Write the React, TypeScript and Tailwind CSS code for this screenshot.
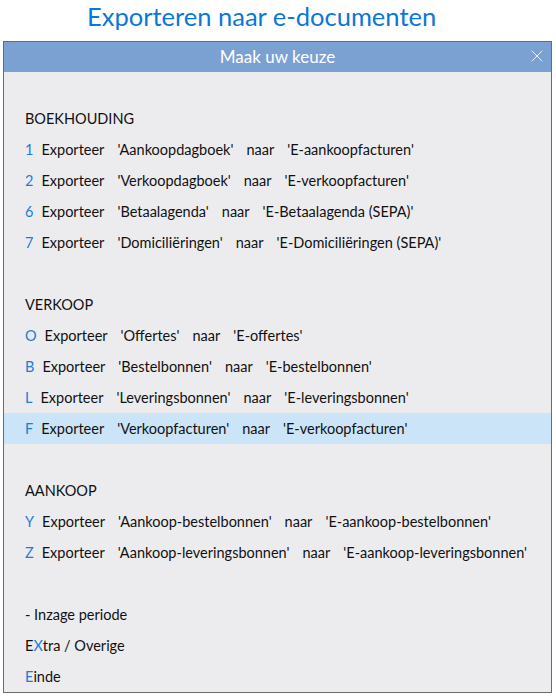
import { X } from "lucide-react";

type Row =
  | { kind: "blank" }
  | { kind: "head"; text: string }
  | { kind: "export"; key: string; from: string; to: string; active?: boolean }
  | { kind: "plain"; hot?: string; pre?: string; rest: string };

const rows: Row[] = [
  { kind: "head", text: "BOEKHOUDING" },
  { kind: "export", key: "1", from: "Aankoopdagboek", to: "E-aankoopfacturen" },
  { kind: "export", key: "2", from: "Verkoopdagboek", to: "E-verkoopfacturen" },
  { kind: "export", key: "6", from: "Betaalagenda", to: "E-Betaalagenda (SEPA)" },
  { kind: "export", key: "7", from: "Domiciliëringen", to: "E-Domiciliëringen (SEPA)" },
  { kind: "blank" },
  { kind: "head", text: "VERKOOP" },
  { kind: "export", key: "O", from: "Offertes", to: "E-offertes" },
  { kind: "export", key: "B", from: "Bestelbonnen", to: "E-bestelbonnen" },
  { kind: "export", key: "L", from: "Leveringsbonnen", to: "E-leveringsbonnen" },
  { kind: "export", key: "F", from: "Verkoopfacturen", to: "E-verkoopfacturen", active: true },
  { kind: "blank" },
  { kind: "head", text: "AANKOOP" },
  { kind: "export", key: "Y", from: "Aankoop-bestelbonnen", to: "E-aankoop-bestelbonnen" },
  { kind: "export", key: "Z", from: "Aankoop-leveringsbonnen", to: "E-aankoop-leveringsbonnen" },
  { kind: "blank" },
  { kind: "plain", rest: "- Inzage periode" },
  { kind: "plain", pre: "E", hot: "X", rest: "tra / Overige" },
  { kind: "plain", hot: "E", rest: "inde" },
];

export default function App() {
  return (
    <div
      className="w-[556px] h-[696px] bg-white relative"
      style={{ fontFamily: "Lato, 'Open Sans', sans-serif" }}
    >
      <h1 className="h-[41px] pt-[1px] pl-[87px] text-[25.5px] leading-[30px] text-[#0a78d7]">
        Exporteren naar e-documenten
      </h1>

      <div className="mx-[3px] w-[549px] border border-[#6b6b6b] bg-[#ececef]">
        {/* Header */}
        <div className="h-[30px] bg-[#7ba1d3] flex items-center justify-center relative">
          <span className="text-[17px] text-white">Maak uw keuze</span>
          <X className="absolute right-[4px] top-[4px] w-[20px] h-[20px] text-white" strokeWidth={1} />
        </div>

        {/* Body */}
        <div className="pt-[31px] text-[14.5px] text-[#111]">
          {rows.map((r, i) => {
            if (r.kind === "blank") return <div key={i} className="h-[31px]" />;
            if (r.kind === "head")
              return (
                <div key={i} className="h-[31px] flex items-center pl-[21px]">
                  {r.text}
                </div>
              );
            if (r.kind === "plain")
              return (
                <div key={i} className="h-[31px] flex items-center pl-[21px]">
                  {r.pre}
                  {r.hot && <span className="text-[#1e7bd8]">{r.hot}</span>}
                  {r.rest}
                </div>
              );
            return (
              <div
                key={i}
                className={
                  "h-[31px] flex items-center pl-[21px] gap-[13px] " +
                  (r.active ? "bg-[#cce4f7]" : "")
                }
              >
                <span className="text-[#1e7bd8] -mr-[5px]">{r.key}</span>
                <span>Exporteer</span>
                <span>'{r.from}'</span>
                <span>naar</span>
                <span>'{r.to}'</span>
              </div>
            );
          })}
        </div>
      </div>
    </div>
  );
}
